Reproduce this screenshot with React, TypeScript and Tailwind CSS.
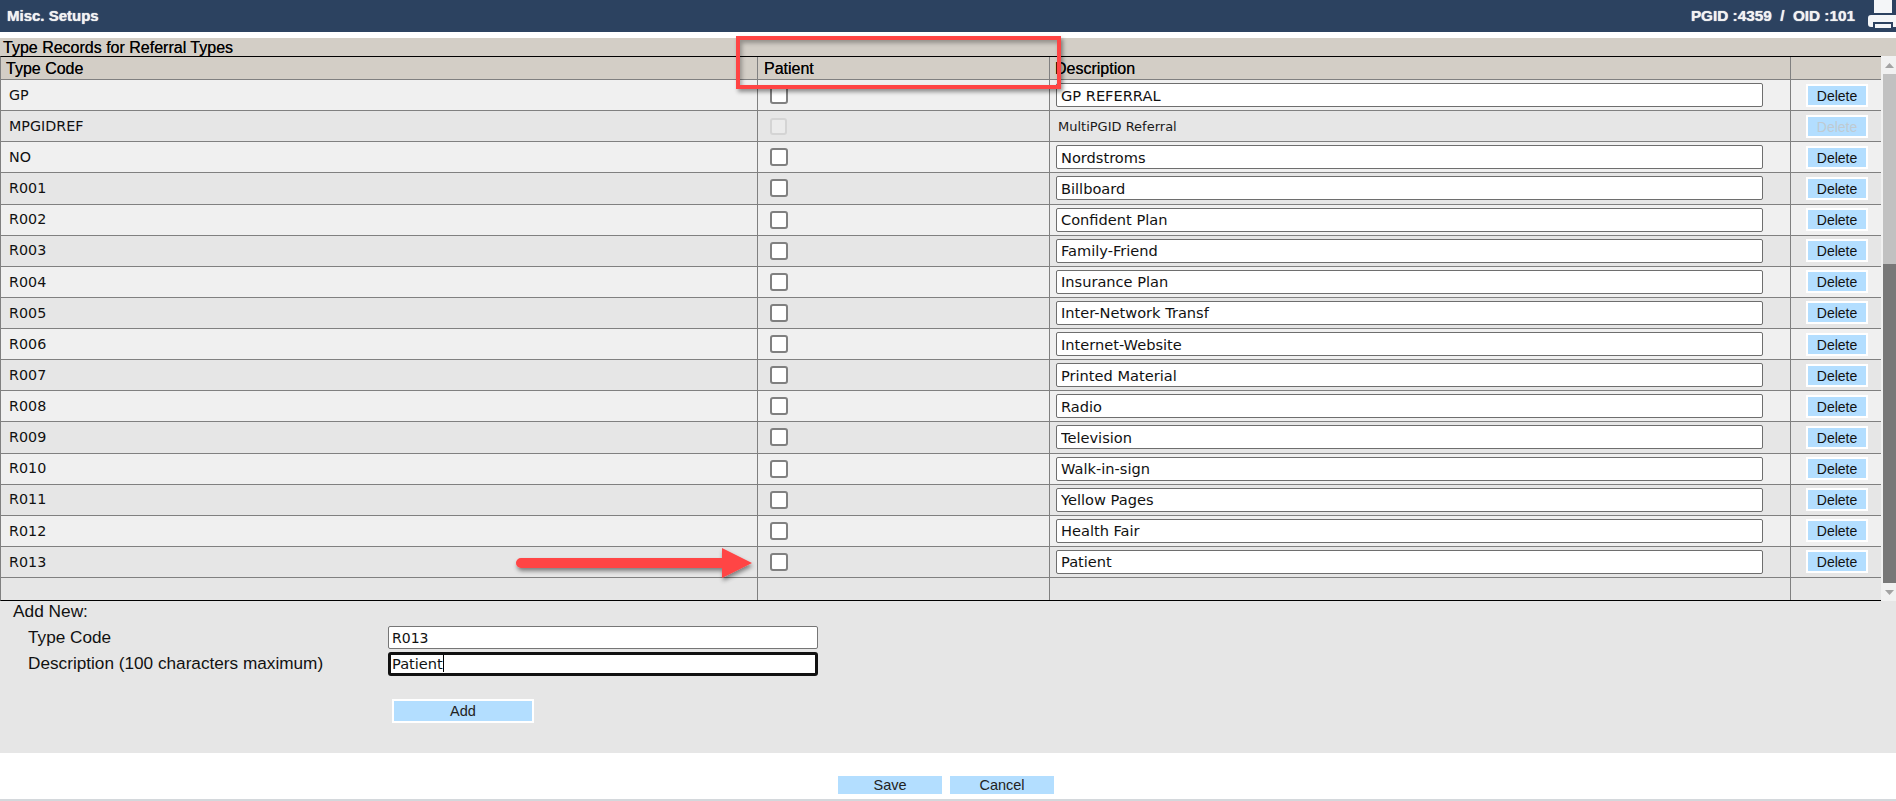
const rows: [string, string][] = [
  ["GP", "GP REFERRAL"],
  ["MPGIDREF", "MultiPGID Referral"],
  ["NO", "Nordstroms"],
  ["R001", "Billboard"],
  ["R002", "Confident Plan"],
  ["R003", "Family-Friend"],
  ["R004", "Insurance Plan"],
  ["R005", "Inter-Network Transf"],
  ["R006", "Internet-Website"],
  ["R007", "Printed Material"],
  ["R008", "Radio"],
  ["R009", "Television"],
  ["R010", "Walk-in-sign"],
  ["R011", "Yellow Pages"],
  ["R012", "Health Fair"],
  ["R013", "Patient"],
];

const cols = "grid grid-cols-[757px_292px_741px_90px]";
const cell = "border-r border-[#808080] flex items-center";
const arial = "font-['Liberation_Sans',Arial,sans-serif]";
const verdana = "font-['DejaVu_Sans',Verdana,sans-serif]";

function Row({ code, desc, index }: { code: string; desc: string; index: number }) {
  const locked = code === "MPGIDREF";
  return (
    <div className={`${cols} h-[31.14px] border-b border-[#808080] ${index % 2 === 0 ? "bg-[#f0f0f0]" : "bg-[#e6e6e6]"}`}>
      <div className={`${cell} pl-[8px] pt-[1px] text-[14.3px]`}>{code}</div>
      <div className={`${cell} pl-[12px]`}>
        {locked ? (
          <span className="w-[17px] h-[17px] rounded-[3px] border-2 border-[#d4d4d4] bg-[#ebebeb]" />
        ) : (
          <span className="w-[18px] h-[18px] rounded-[3px] border-2 border-[#808080] bg-white" />
        )}
      </div>
      <div className={`${cell} pl-[6px]`}>
        {locked ? (
          <span className="pl-[2px] pt-[1px] text-[13px] text-[#1a1a1a]">{desc}</span>
        ) : (
          <input
            readOnly
            value={desc}
            className="w-[707px] h-[24px] px-[4px] text-[14.6px] bg-white border border-[#6e6e6e] rounded-[2px] outline-none"
          />
        )}
      </div>
      <div className="flex items-center pl-[15px]">
        <button
          className={`${arial} w-[62px] h-[23px] text-[14px] bg-[#b3deff] border-2 border-white ${locked ? "text-[#bfcad2]" : "text-[#111]"}`}
        >
          Delete
        </button>
      </div>
    </div>
  );
}

export default function App() {
  return (
    <div className={`${verdana} relative w-[1896px] h-[801px] overflow-hidden bg-white text-[#111]`}>
      <header className={`${arial} h-[32px] bg-[#2c4260] text-[#f2f2f2] flex items-center justify-between`}>
        <span className="pl-[7px] text-[15px] font-bold [text-shadow:0_0_1px_#fff]">Misc. Setups</span>
        <div className="flex items-center">
          <span className="text-[15.3px] font-bold whitespace-pre mr-[13px] [text-shadow:0_0_1px_#fff]">PGID :4359  /  OID :101</span>
          <svg width="28" height="32" viewBox="0 0 28 32" fill="#f4f6f8">
            <path d="M6 0h18v13H6z" />
            <path d="M3 15h25v12h-3v-5H5v5H3a3 3 0 0 1-3-3v-6a3 3 0 0 1 3-3z" />
            <path d="M7 24h16v4H7z" />
          </svg>
        </div>
      </header>

      <div className="h-[6px]" />
      <div className={`${arial} h-[18px] bg-[#d3cec6] pl-[3px] text-[16px] leading-[19px] text-black [text-shadow:0_0_0.5px_#333]`}>
        Type Records for Referral Types
      </div>

      <div className="flex h-[545px]">
        <div className="w-[1881px] border-l border-[#808080] border-t border-t-black border-b border-b-black flex flex-col">
          <div className={`${cols} ${arial} h-[23px] shrink-0 bg-[#d3cec6] border-b border-[#808080] text-[16px] text-black [text-shadow:0_0_0.5px_#333]`}>
            <div className={`${cell} pl-[5px] pb-[1px]`}>Type Code</div>
            <div className={`${cell} pl-[6px] pb-[1px]`}>Patient</div>
            <div className={`${cell} pl-[5px] pb-[1px]`}>Description</div>
            <div />
          </div>
          {rows.map(([code, desc], i) => (
            <Row key={code} code={code} desc={desc} index={i} />
          ))}
          <div className={`${cols} flex-1 bg-[#e6e6e6]`}>
            <div className={cell} />
            <div className={cell} />
            <div className={cell} />
            <div />
          </div>
        </div>
        <div className="w-[15px] bg-[#f1f1f1] flex flex-col">
          <div className="h-[18px] pl-[2px] flex items-center justify-center">
            <svg width="9" height="5" viewBox="0 0 9 5" fill="#a3a3a3"><path d="M4.5 0 9 5H0z" /></svg>
          </div>
          <div className="h-[190px] ml-[2px] bg-[#c1c1c1]" />
          <div className="h-[319px] ml-[2px] bg-[#787878]" />
          <div className="flex-1 pl-[2px] flex items-center justify-center">
            <svg width="9" height="5" viewBox="0 0 9 5" fill="#a3a3a3"><path d="M0 0h9L4.5 5z" /></svg>
          </div>
        </div>
      </div>

      <section className="h-[152px] bg-[#e6e6e6]">
        <div className={`${arial} pl-[13px] pt-[1px] text-[17.3px] leading-[19px] text-[#111]`}>Add New:</div>
        <div className={`${arial} mt-[4px] pl-[28px] grid grid-cols-[360px_430px] text-[17.2px] items-center`}>
          <span>Type Code</span>
          <input
            readOnly
            value="R013"
            className={`${verdana} h-[23px] px-[3px] text-[14px] bg-white border border-[#767676] rounded-[2px] outline-none`}
          />
          <span>Description (100 characters maximum)</span>
          <div className={`${verdana} h-[24px] px-[1px] flex items-center text-[14.6px] bg-white border-[3px] border-[#111] rounded-[3px]`}>
            Patient<span className="w-[1px] h-[17px] bg-black" />
          </div>
        </div>
        <button className={`${arial} block ml-[392px] mt-[22px] w-[142px] h-[24px] text-[14.5px] bg-[#b3deff] border-2 border-white text-[#222]`}>
          Add
        </button>
      </section>

      <footer className={`${arial} h-[46px] flex items-start justify-center gap-[8px] pt-[23px] pr-[4px]`}>
        <button className="w-[104px] h-[18px] text-[14.5px] leading-[18px] bg-[#b3deff] text-[#222]">Save</button>
        <button className="w-[104px] h-[18px] text-[14.5px] leading-[18px] bg-[#b3deff] text-[#222]">Cancel</button>
      </footer>
      <div className="h-[2px] bg-[#d4d8dc]" />

      {/* callouts drawn over the screenshot */}
      <div className="absolute left-[736px] top-[36px] w-[325px] h-[53px] border-4 border-[#ff4444] shadow-[2px_3px_4px_rgba(0,0,0,0.4),inset_2px_3px_4px_rgba(0,0,0,0.3)]" />
      <svg className="absolute left-[510px] top-[542px]" width="250" height="44" viewBox="0 0 250 44">
        <defs>
          <filter id="sh" x="-10%" y="-30%" width="120%" height="170%">
            <feDropShadow dx="1" dy="3" stdDeviation="2" floodColor="#000" floodOpacity="0.45" />
          </filter>
        </defs>
        <path d="M11 16h201V6l30 15-30 15V26H11a5 5 0 0 1 0-10z" fill="#ff4444" filter="url(#sh)" />
      </svg>
    </div>
  );
}
